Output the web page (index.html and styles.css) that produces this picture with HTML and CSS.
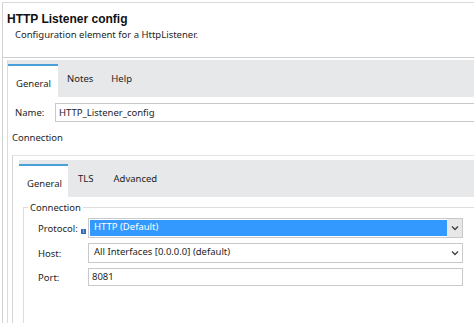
FILE: index.html
```html
<!DOCTYPE html>
<html lang="en">
<head>
    <meta charset="UTF-8">
    <title>HTTP Listener config</title>
    <link rel="stylesheet" href="styles.css">
</head>
<body>
    <div class="window">
        <div class="head">
            <h1>HTTP Listener config</h1>
            <p>Configuration element for a HttpListener.</p>
        </div>

        <div class="editor">
            <div class="tabs">
                <span class="tab active">General</span>
                <span class="tab">Notes</span>
                <span class="tab">Help</span>
            </div>

            <div class="panel">
                <div class="name-row">
                    <span class="label">Name:</span>
                    <div class="box name-box">HTTP_Listener_config</div>
                </div>

                <div class="section-title">Connection</div>

                <div class="inner">
                    <div class="tabs inner-tabs">
                        <span class="tab active">General</span>
                        <span class="tab">TLS</span>
                        <span class="tab">Advanced</span>
                    </div>

                    <div class="inner-panel">
                        <fieldset class="group">
                            <legend>Connection</legend>

                            <div class="field-row">
                                <span class="field-label">Protocol:</span>
                                <span class="info">i</span>
                                <div class="box select selected">
                                    <span class="value">HTTP (Default)</span>
                                    <span class="arrow">
                                        <svg width="8" height="6" viewBox="0 0 8 6"><path d="M1 1.5 L4 4.5 L7 1.5" fill="none" stroke="#444" stroke-width="1.4"/></svg>
                                    </span>
                                </div>
                            </div>

                            <div class="field-row">
                                <span class="field-label">Host:</span>
                                <div class="box select">
                                    <span class="value">All Interfaces [0.0.0.0] (default)</span>
                                    <span class="arrow">
                                        <svg width="8" height="6" viewBox="0 0 8 6"><path d="M1 1.5 L4 4.5 L7 1.5" fill="none" stroke="#444" stroke-width="1.4"/></svg>
                                    </span>
                                </div>
                            </div>

                            <div class="field-row">
                                <span class="field-label">Port:</span>
                                <div class="box">8081</div>
                            </div>
                        </fieldset>
                    </div>
                </div>
            </div>
        </div>
    </div>
</body>
</html>
```

FILE: styles.css
```css
body {
    margin: 0;
    background: #ffffff;
    font-family: "Noto Sans", sans-serif;
    font-size: 9.5px;
    color: #1e1e1e;
    overflow: hidden;
}

.window {
    width: 520px;
    height: 340px;
    margin: 2px 0 0 2px;
    border-top: 1px solid #d9d9d9;
    border-left: 1px solid #d2d2d2;
}

.head {
    height: 54px;
    padding: 0 0 0 4px;
    border-bottom: 1px solid #cfcfcf;
}

.head h1 {
    margin: 0;
    padding-top: 9px;
    font-family: "Liberation Sans", sans-serif;
    font-size: 12px;
    font-weight: bold;
    color: #111;
}

.head p {
    margin: 2px 0 0 8px;
}

.editor {
    margin: 2px 0 0 4px;
    border-left: 1px solid #dcdcdc;
}

.tabs {
    display: flex;
    height: 37px;
    background: #e7e8e9;
}

.tab {
    padding: 12px 9px 0;
}

.tab.active {
    width: 50px;
    box-sizing: border-box;
    padding-left: 8px;
    padding-top: 11px;
    margin-top: 4px;
    background: #ffffff;
    border-top: 2px solid #4a9fd8;
}

.panel {
    padding: 6px 0 0 4px;
}

.name-row {
    display: flex;
    align-items: center;
    height: 19px;
}

.label {
    width: 40px;
    padding-left: 3px;
}

.box {
    flex: 1;
    height: 16px;
    line-height: 16px;
    border: 1px solid #c9c9c9;
    padding-left: 3px;
    background: #fff;
}

.name-row .box {
    height: 17px;
    line-height: 17px;
}

.section-title {
    margin: 9px 0 0 0;
    height: 14px;
}

.inner {
    margin-top: 10px;
    border-top: 1px solid #e4e4e4;
    border-left: 1px solid #d6d6d6;
    padding: 4px 0 0 6px;
}

.inner-tabs {
    height: 37px;
}

.inner-tabs .tab {
    padding-left: 10px;
    padding-right: 10px;
}

.inner-tabs .tab.active {
    width: 49px;
    padding-left: 8px;
}

.inner-panel {
    padding: 4px 0 0 4px;
}

.group {
    margin: 0;
    padding: 4px 0 40px 13px;
    border: 1px solid #dddddd;
    border-right: none;
}

.group legend {
    padding: 0 2px;
    margin-left: -9px;
}

.field-row {
    display: flex;
    align-items: center;
    width: 426px;
    margin-bottom: 5px;
    position: relative;
}

.field-label {
    width: 50px;
    padding-left: 1px;
}

.info {
    position: absolute;
    left: 44px;
    top: 11px;
    width: 5px;
    height: 5px;
    background: #2f6fb0;
    color: #fff;
    font-size: 5px;
    line-height: 5px;
    text-align: center;
}

.select {
    display: flex;
    padding: 1px 0 1px 1px;
}

.select .value {
    flex: 1;
    padding-left: 4px;
    line-height: 14px;
}

.select.selected .value {
    background: #3399ff;
    color: #fff;
}

.arrow {
    width: 15px;
    display: flex;
    align-items: center;
    justify-content: center;
}

.select.selected .arrow {
    background: #e8e8e8;
    margin: -1px 0;
}
```
